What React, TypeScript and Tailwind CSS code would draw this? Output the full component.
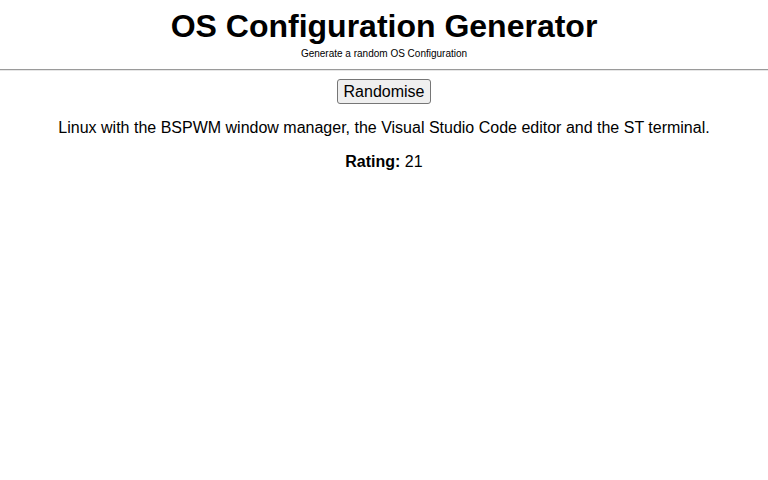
export default function App() {
  return (
    <div className="min-h-screen bg-white text-black" style={{ fontFamily: '"Liberation Sans", Arial, sans-serif' }}>
      {/* header */}
      <header className="pt-[8px] text-center">
        <h1 className="text-[32px] font-bold leading-[37px]">OS Configuration Generator</h1>
        <p className="mt-[3px] text-[10px] leading-[12px]">Generate a random OS Configuration</p>
      </header>
      <div className="mt-[9px] h-[2px] border-t border-b border-t-[#9a9a9a] border-b-[#e6e6e6]" />

      <main className="flex flex-col items-center text-[16px] leading-[18px]">
        <button className="mt-[8px] rounded-[3px] border border-[#767676] bg-[#efefef] px-[6px] py-[3px] text-[16px] leading-[17px]">
          Randomise
        </button>
        <p className="mt-[15px]">
          Linux with the BSPWM window manager, the Visual Studio Code editor and the ST terminal.
        </p>
        <p className="mt-[16px]">
          <span className="font-bold">Rating:</span> 21
        </p>
      </main>
    </div>
  );
}
